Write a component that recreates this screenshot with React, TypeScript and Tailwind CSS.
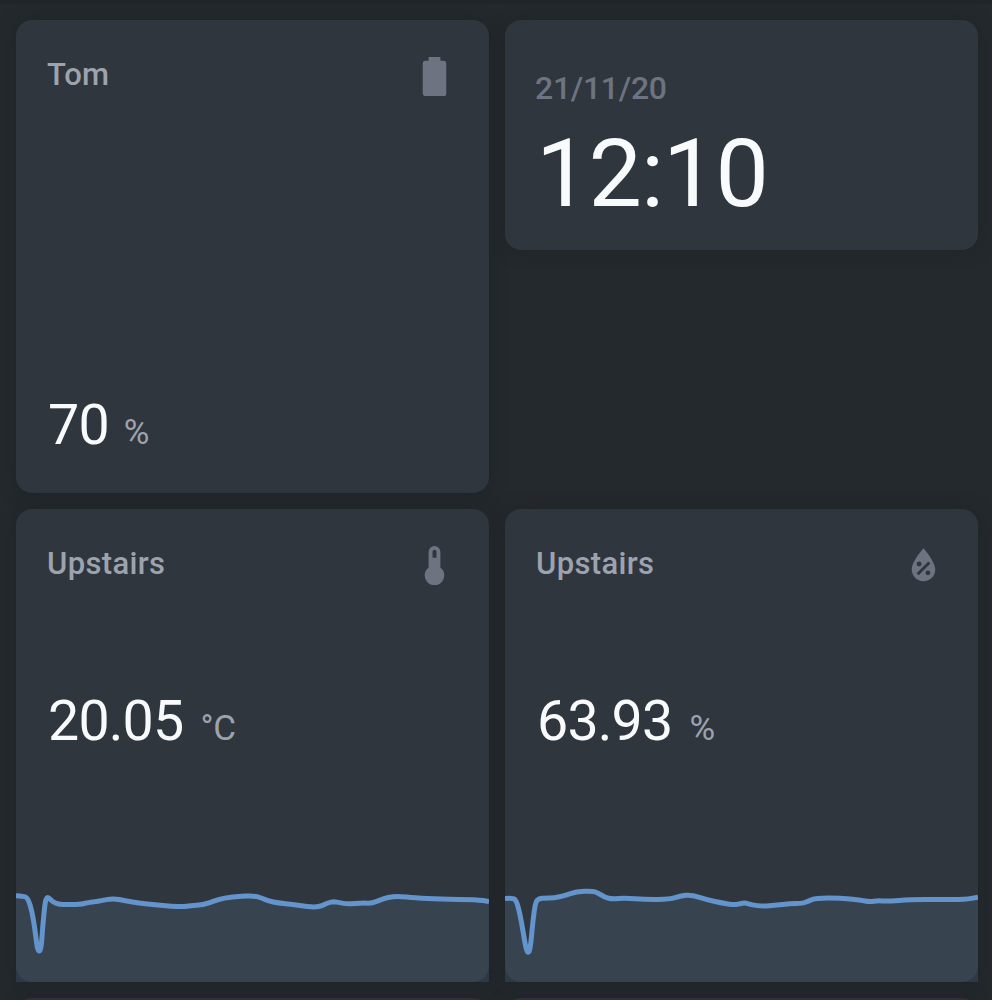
import type { ReactNode } from "react";

const ICONS = {
  battery:
    "M16.67,4H15V2H9V4H7.33A1.33,1.33 0 0,0 6,5.33V20.67C6,21.4 6.6,22 7.33,22H16.67A1.33,1.33 0 0,0 18,20.67V5.33C18,4.6 17.4,4 16.67,4Z",
  thermometer: "M15 13V5A3 3 0 0 0 9 5V13A5 5 0 1 0 15 13M12 4A1 1 0 0 1 13 5V8H11V5A1 1 0 0 1 12 4Z",
  humidity:
    "M12,3.25C12,3.25 6,10 6,14C6,17.32 8.69,20 12,20A6,6 0 0,0 18,14C18,10 12,3.25 12,3.25M14.47,9.97L15.53,11.03L9.53,17.03L8.47,15.97M9.75,10A1.25,1.25 0 0,1 11,11.25A1.25,1.25 0 0,1 9.75,12.5A1.25,1.25 0 0,1 8.5,11.25A1.25,1.25 0 0,1 9.75,10M14.25,14.5A1.25,1.25 0 0,1 15.5,15.75A1.25,1.25 0 0,1 14.25,17A1.25,1.25 0 0,1 13,15.75A1.25,1.25 0 0,1 14.25,14.5Z",
};

type Point = [number, number];

const temperature: Point[] = [
  [0, 13.7], [8, 14], [12, 16.5], [16, 29], [19, 48], [21, 64], [22, 68], [23.2, 69.4], [24.4, 68], [25.5, 62], [27, 41],
  [29, 21], [30.5, 16], [32, 15.2], [35, 18], [39, 21.3], [46, 22.7], [64, 22.5], [72, 20.5], [81, 19.5], [97, 16.2],
  [109, 18.7], [124, 21.2], [144, 23.5], [167, 24.9], [174, 23.7], [187, 23], [199, 18.7], [208, 16], [222, 14.5],
  [237, 13.6], [245, 15.8], [255, 20], [284, 23.7], [299, 25.3], [306, 23.7], [312, 20.7], [318, 19.6], [324, 20.7],
  [331, 22], [347, 21], [356, 21.3], [364, 18], [372, 15.2], [382, 14.1], [399, 15.9], [424, 17.3], [461, 17.5], [473, 19.5],
];

const humidity: Point[] = [
  [0, 16.5], [8, 15.7], [11.5, 19], [15, 32], [18, 49], [20.5, 64], [22, 69], [23.2, 70.8], [24.5, 69], [26, 60],
  [28, 38], [30.5, 20], [34, 16.6], [40, 16], [49, 16], [60, 13.5], [71, 9.7], [87, 8.9], [93, 10.7], [100, 15.5],
  [107, 17], [120, 16.1], [140, 17.5], [165, 17.3], [175, 14], [186, 12.6], [203, 18], [217, 21], [229, 23], [235, 21.7],
  [240, 20.8], [247, 22.8], [258, 24.4], [270, 23.2], [285, 21.7], [298, 21.5], [303, 19.2], [311, 16.1], [335, 16],
  [355, 18.2], [365, 19.8], [372, 18.7], [383, 19.2], [405, 17.6], [435, 17.6], [460, 17.5], [473, 15.2],
];

// Smooth the samples with midpoint quadratics
function toPath(points: Point[]) {
  let d = `M${points[0][0]},${points[0][1]}`;
  for (let i = 1; i < points.length - 1; i++) {
    const [x, y] = points[i];
    const [nx, ny] = points[i + 1];
    d += ` Q${x},${y} ${(x + nx) / 2},${(y + ny) / 2}`;
  }
  const [lx, ly] = points[points.length - 1];
  return `${d} L${lx},${ly}`;
}

function Graph({ points }: { points: Point[] }) {
  const line = toPath(points);
  return (
    <svg viewBox="0 0 473 100" className="block h-[100px] w-full">
      <path d={`${line} V100 H0 Z`} fill="#374450" />
      <path d={line} fill="none" stroke="#6394cc" strokeWidth="5" strokeLinejoin="round" />
    </svg>
  );
}

function Card({ className = "", children }: { className?: string; children?: ReactNode }) {
  return <div className={`rounded-2xl shadow-[0_0_14px_2px_rgba(30,34,38,0.5)] ${className}`}>{children}</div>;
}

interface SensorProps {
  name: string;
  icon: keyof typeof ICONS;
  value: string;
  unit: string;
  points?: Point[];
}

function Sensor({ name, icon, value, unit, points }: SensorProps) {
  return (
    <Card className={`flex h-[473px] flex-col justify-between bg-[#30363e] ${points ? "rounded-b-none" : ""}`}>
      <div className="flex h-20 items-start justify-between pt-8 pr-[31px] pl-[31px]">
        <span className="pt-px text-[31px] leading-[44px] font-medium tracking-[0.35px] text-[#9da3ae]">{name}</span>
        <svg viewBox="0 0 24 24" className="mt-px size-[47px]" fill="#6d7380">
          <path d={ICONS[icon]} />
        </svg>
      </div>
      <div
        className={`flex items-baseline pl-8 leading-[64px] ${points ? "gap-[17px] pb-[21px]" : "gap-[15px] pb-7"}`}
      >
        <span className="text-[55.5px] tracking-[-0.8px] text-[#f9fafb]">{value}</span>
        <span className="text-[35px] tracking-[-0.3px] text-[#9da3ae]">{unit}</span>
      </div>
      {points && (
        <div className="bg-[#2d3947]">
          <div className="overflow-hidden rounded-b-2xl bg-[#30363e]">
            <Graph points={points} />
          </div>
        </div>
      )}
    </Card>
  );
}

export default function App() {
  return (
    <main className="h-[1000px] w-[992px] overflow-hidden border-t-4 border-[#202529] bg-[#24292d] font-['Roboto',sans-serif]">
      <div className="grid grid-cols-[473px_473px] items-start gap-4 pt-4 pl-4">
        <Sensor name="Tom" icon="battery" value="70" unit="%" />
        <Card className="h-[230px] bg-[#30363e] pt-[46px] pl-[30px]">
          <div className="text-[32px] leading-[44px] font-medium tracking-[-0.3px] text-[#6d7380]">21/11/20</div>
          <div className="pl-px text-[95px] leading-[128px] tracking-[-0.9px] text-[#f9fafb]">12:10</div>
        </Card>
        <Sensor name="Upstairs" icon="thermometer" value="20.05" unit="°C" points={temperature} />
        <Sensor name="Upstairs" icon="humidity" value="63.93" unit="%" points={humidity} />
        <Card className="h-[473px] bg-[#302f3b]" />
        <Card className="h-[473px] bg-[#302f3b]" />
      </div>
    </main>
  );
}
